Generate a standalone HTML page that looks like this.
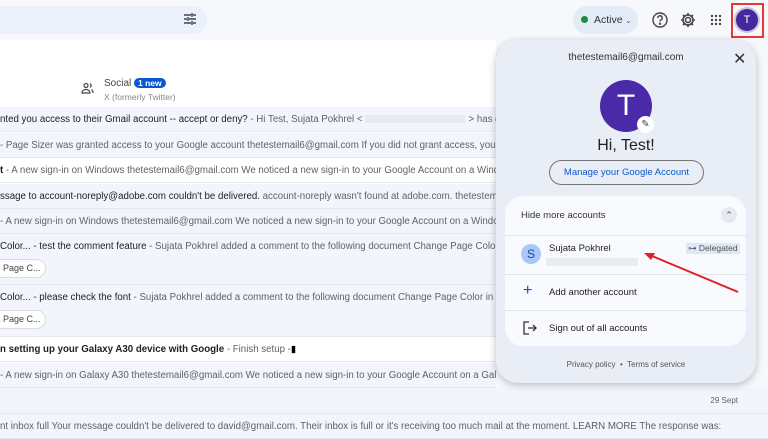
<!DOCTYPE html>
<html><head><meta charset="utf-8"><style>
*{box-sizing:border-box;margin:0;padding:0}
body{width:768px;height:432px;overflow:hidden;background:#f6f8fc;font-family:"Liberation Sans",sans-serif;position:relative;color:#444}
.abs{position:absolute}
.row{position:absolute;left:0;width:496px;height:25px;border-bottom:1px solid #e3e7ee;background:#f2f6fc;font-size:9.7px;line-height:26px;white-space:nowrap;overflow:hidden;color:#5f6368}
.row b{color:#202124;font-weight:normal}
.row.u{background:#fff}.row.u b{font-weight:bold}
.chip{position:absolute;left:-12px;border:1px solid #dadce0;border-radius:10px;height:19px;width:58px;font-size:9px;line-height:17px;padding-left:14px;color:#444;background:#fff}
.panel{position:absolute;left:496px;top:40px;width:260px;height:343px;background:#e9eef6;border-radius:22px;box-shadow:0 2px 8px rgba(0,0,0,.25)}
</style></head><body>
<div class="abs" style="left:-20px;top:6px;width:227px;height:28px;background:#eaf1fb;border-radius:14px"></div>
<svg class="abs" style="left:183px;top:12px" width="14" height="14" viewBox="0 0 14 14" stroke="#444" stroke-width="1.4"><path d="M1 3h7M10 3h3M9 1v4M1 7h3M6 7h7M5 5v4M1 11h7M10 11h3M9 9v4"/></svg>
<div class="abs" style="left:0;top:40px;width:496px;height:392px;background:#fff"></div>
<div class="abs" style="left:573px;top:6px;width:65px;height:28px;background:#e3ecf6;border-radius:14px;font-size:10.5px;line-height:28px;color:#333"><span style="display:inline-block;width:7px;height:7px;border-radius:50%;background:#1e8e3e;margin:0 6px 0 8px"></span>Active <span style="font-size:7px">⌄</span></div>
<svg class="abs" style="left:651px;top:11px" width="18" height="18" viewBox="0 0 18 18" fill="none" stroke="#444" stroke-width="1.4"><circle cx="9" cy="9" r="7"/><path d="M6.8 7a2.2 2.2 0 1 1 3 2c-.6.3-.8.7-.8 1.5"/><circle cx="9" cy="12.8" r=".5" fill="#444"/></svg>
<svg class="abs" style="left:679px;top:11px" width="18" height="18" viewBox="0 0 18 18" fill="none" stroke="#444" stroke-width="1.6"><circle cx="9" cy="9" r="2.5"/><path d="M9 2v2M9 14v2M2 9h2M14 9h2M4 4l1.4 1.4M12.6 12.6L14 14M4 14l1.4-1.4M12.6 5.4L14 4"/><circle cx="9" cy="9" r="5"/></svg>
<svg class="abs" style="left:710px;top:14px" width="12" height="12" viewBox="0 0 12 12" fill="#444"><circle cx="2" cy="2" r="1.2"/><circle cx="6" cy="2" r="1.2"/><circle cx="10" cy="2" r="1.2"/><circle cx="2" cy="6" r="1.2"/><circle cx="6" cy="6" r="1.2"/><circle cx="10" cy="6" r="1.2"/><circle cx="2" cy="10" r="1.2"/><circle cx="6" cy="10" r="1.2"/><circle cx="10" cy="10" r="1.2"/></svg>
<div class="abs" style="left:731px;top:3px;width:33px;height:35px;border:2px solid #e53935"></div>
<div class="abs" style="left:736px;top:9px;width:22px;height:22px;border-radius:50%;background:#4527a0;box-shadow:0 0 0 2px #c5c9d6;color:#fff;font-size:11px;text-align:center;line-height:22px">T</div>

<svg class="abs" style="left:81px;top:82px" width="13" height="12" viewBox="0 0 13 12" fill="none" stroke="#444" stroke-width="1.2"><circle cx="5" cy="3.5" r="2"/><path d="M1 11c0-2.5 2-3.5 4-3.5s4 1 4 3.5zM9 1.7a2 2 0 0 1 0 3.6M10.5 7.5c1 .5 1.5 1.5 1.5 3.5"/></svg>
<div class="abs" style="left:104px;top:78px;font-size:10px;color:#444">Social <span style="background:#0b57d0;color:#fff;border-radius:7px;padding:0 4px;font-size:8.5px;font-weight:bold">1 new</span></div>
<div class="abs" style="left:104px;top:92px;font-size:8.5px;color:#888">X (formerly Twitter)</div>

<div class="row" style="top:107px"><b>nted you access to their Gmail account -- accept or deny?</b> - Hi Test, Sujata Pokhrel &lt;<span style="display:inline-block;width:100px;height:8px;background:#e8eaee;vertical-align:middle;margin:0 3px"></span>&gt; has granted</div>
<div class="row" style="top:133px"><b></b>- Page Sizer was granted access to your Google account thetestemail6@gmail.com If you did not grant access, you should</div>
<div class="row u" style="top:158px"><b>t</b> - A new sign-in on Windows thetestemail6@gmail.com We noticed a new sign-in to your Google Account on a Windows de</div>
<div class="row" style="top:184px"><b>ssage to account-noreply@adobe.com couldn't be delivered.</b> account-noreply wasn't found at adobe.com. thetestemail6 c</div>
<div class="row" style="top:209px">- A new sign-in on Windows thetestemail6@gmail.com We noticed a new sign-in to your Google Account on a Windows de</div>
<div class="row" style="top:234px;height:51px"><b>Color... - test the comment feature</b> - Sujata Pokhrel added a comment to the following document Change Page Color in Go<div class="chip" style="top:25px">Page C...</div></div>
<div class="row" style="top:285px;height:52px"><b>Color... - please check the font</b> - Sujata Pokhrel added a comment to the following document Change Page Color in Google<div class="chip" style="top:25px">Page C...</div></div>
<div class="row u" style="top:337px"><b>n setting up your Galaxy A30 device with Google</b> - Finish setup -<span style="color:#000">▮</span></div>
<div class="row" style="top:363px">- A new sign-in on Galaxy A30 thetestemail6@gmail.com We noticed a new sign-in to your Google Account on a Galaxy A30</div>
<div class="row" style="top:388px;height:26px;width:768px"><span class="abs" style="right:30px;font-size:8px">29 Sept</span></div>
<div class="row" style="top:414px;width:768px;line-height:26px">nt inbox full Your message couldn't be delivered to david@gmail.com. Their inbox is full or it's receiving too much mail at the moment. LEARN MORE The response was:</div>

<div class="panel">
<div class="abs" style="left:0;width:260px;top:12px;text-align:center;font-size:10px;color:#333">thetestemail6@gmail.com</div>
<div class="abs" style="left:237px;top:9px;font-size:16px;color:#333">✕</div>
<div class="abs" style="left:104px;top:40px;width:52px;height:52px;border-radius:50%;background:#4a2aa8;color:#fff;font-size:30px;text-align:center;line-height:52px">T</div>
<div class="abs" style="left:141px;top:76px;width:17px;height:17px;border-radius:50%;background:#fff;font-size:10px;text-align:center;line-height:17px;color:#444">✎</div>
<div class="abs" style="left:0;width:260px;top:97px;text-align:center;font-size:16px;color:#222">Hi, Test!</div>
<div class="abs" style="left:53px;top:120px;width:155px;height:25px;border:1px solid #777;border-radius:13px;text-align:center;font-size:9.5px;line-height:23px;color:#0b57d0">Manage your Google Account</div>
<div class="abs" style="left:9px;top:156px;width:241px;height:150px;background:#f8fafd;border-radius:18px">
 <div class="abs" style="left:16px;top:14px;font-size:9.5px;color:#333">Hide more accounts</div>
 <div class="abs" style="left:216px;top:11px;width:16px;height:16px;border-radius:50%;background:#e6eaf0;text-align:center;font-size:9px;line-height:16px">⌃</div>
 <div class="abs" style="left:0;top:39px;width:241px;height:1px;background:#e0e4ea"></div>
 <div class="abs" style="left:16px;top:48px;width:20px;height:20px;border-radius:50%;background:#a8c7fa;color:#1a4a8a;text-align:center;line-height:20px;font-size:12px">S</div>
 <div class="abs" style="left:44px;top:47px;font-size:9.5px;color:#222">Sujata Pokhrel</div>
 <div class="abs" style="left:41px;top:62px;width:92px;height:8px;background:#e9ebee"></div>
 <div class="abs" style="left:181px;top:47px;background:#dfe8f6;font-size:8.5px;color:#555;padding:0 2px">⊶ Delegated</div>
 <div class="abs" style="left:0;top:78px;width:241px;height:1px;background:#e0e4ea"></div>
 <div class="abs" style="left:18px;top:86px;font-size:16px;color:#0b57d0">+</div>
 <div class="abs" style="left:44px;top:91px;font-size:9.5px;color:#222">Add another account</div>
 <div class="abs" style="left:0;top:114px;width:241px;height:1px;background:#e0e4ea"></div>
 <svg class="abs" style="left:18px;top:125px" width="14" height="14" viewBox="0 0 14 14" fill="none" stroke="#333" stroke-width="1.3"><path d="M6 1H1v12h5M5 7h8M10 4l3 3-3 3"/></svg>
 <div class="abs" style="left:44px;top:127px;font-size:9.5px;color:#222">Sign out of all accounts</div>
</div>
<div class="abs" style="left:0;width:260px;top:320px;text-align:center;font-size:8px;color:#555">Privacy policy &nbsp;•&nbsp; Terms of service</div>
</div>
<svg class="abs" style="left:0;top:0" width="768" height="432"><path d="M738 292L652 256" stroke="#e02020" stroke-width="2"/><path d="M644 253l11 0-4 7z" fill="#e02020"/></svg>
</body></html>
